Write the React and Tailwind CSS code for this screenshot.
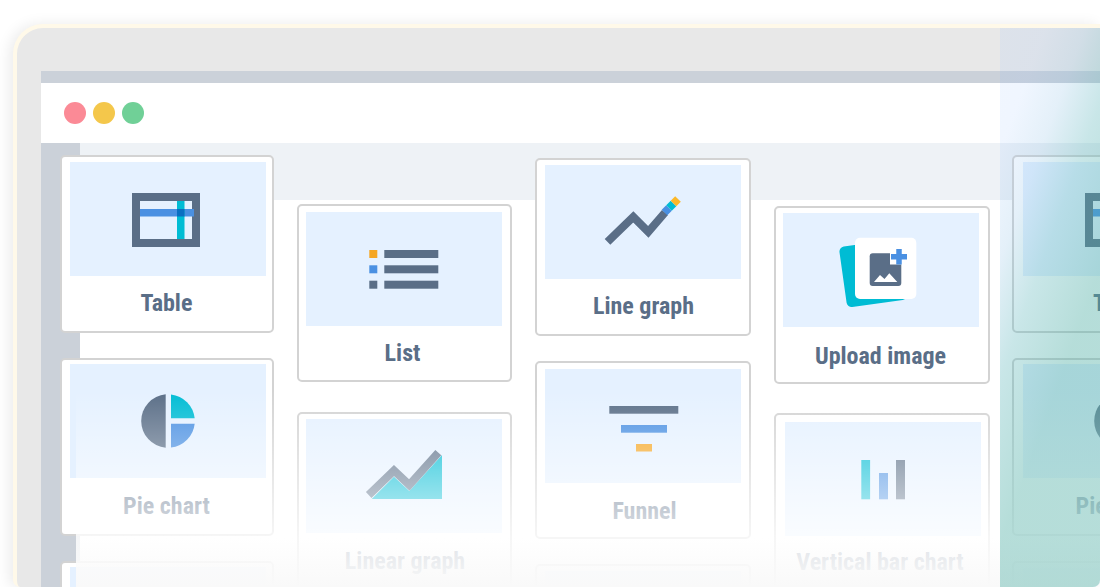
const SLATE = "#5a6e87";
const BLUE = "#4a90e2";
const CYAN = "#00bcd4";
const ORANGE = "#f5a623";

const TableIcon = () => (
  <svg viewBox="0 0 196 114" className="h-full w-full">
    <rect x="66" y="35" width="60" height="46" fill="none" stroke={SLATE} strokeWidth="8" />
    <rect x="70" y="47" width="54" height="7.5" fill={BLUE} />
    <rect x="107" y="39" width="7.5" height="38" fill={CYAN} />
    <rect x="107" y="47" width="7.5" height="7.5" fill="#0a6fc2" />
  </svg>
);

const ListIcon = () => (
  <svg viewBox="0 0 196 114" className="h-full w-full">
    <rect x="63.3" y="38" width="8" height="8" fill={ORANGE} />
    <rect x="63.3" y="53.3" width="8" height="8" fill={BLUE} />
    <rect x="63.3" y="68.7" width="8" height="8" fill={SLATE} />
    <rect x="78.3" y="38" width="54" height="8" fill={SLATE} />
    <rect x="78.3" y="53.3" width="54" height="8" fill={SLATE} />
    <rect x="78.3" y="68.7" width="54" height="8" fill={SLATE} />
  </svg>
);

const LineIcon = () => (
  <svg viewBox="0 0 196 114" className="h-full w-full">
    <polyline points="62.5,76.8 88.3,51.8 103.3,66.8 120,47.5" fill="none" stroke={SLATE} strokeWidth="8" />
    <line x1="119.5" y1="47.5" x2="124" y2="43" stroke={BLUE} strokeWidth="8" />
    <line x1="124" y1="43" x2="128.5" y2="38.5" stroke={CYAN} strokeWidth="8" />
    <line x1="128.5" y1="38.5" x2="133" y2="34" stroke="#fbb829" strokeWidth="8" />
  </svg>
);

const UploadIcon = () => (
  <svg viewBox="0 0 196 114" className="h-full w-full">
    <rect x="59.75" y="29.75" width="61" height="61" rx="5" fill={CYAN} transform="rotate(-8 90.25 60.25)" />
    <rect x="72" y="24.7" width="61.3" height="61.3" rx="5" fill="#fff" />
    <rect x="86.7" y="40.3" width="31.6" height="32.7" rx="3" fill={SLATE} />
    <rect x="107" y="36" width="14" height="15.5" fill="#fff" />
    <path d="M91 69 L97 62 L101.5 66 L106.3 60.3 L114.3 69Z" fill="#fff" />
    <path d="M108 43.7 H124 M116 36 V51.5" stroke={BLUE} strokeWidth="5.5" fill="none" />
  </svg>
);

const PieIcon = () => (
  <svg viewBox="0 0 196 114" className="h-full w-full">
    <path d="M95.7 30.3 A26.8 26.8 0 0 0 95.7 83.7Z" fill={SLATE} />
    <path d="M101 30.4 A26.8 26.8 0 0 1 124.66 54.3 L101 54.3Z" fill={CYAN} />
    <path d="M101 59.7 L124.66 59.7 A26.8 26.8 0 0 1 101 83.6Z" fill={BLUE} />
  </svg>
);

const LinearIcon = () => (
  <svg viewBox="0 0 196 114" className="h-full w-full">
    <path d="M65.7 80 L88 57.7 L103.3 72 L136 36 V80Z" fill={CYAN} />
    <polyline points="62.7,76 88,51.6 103.3,66 132.3,33.7" fill="none" stroke={SLATE} strokeWidth="8" />
  </svg>
);

const FunnelIcon = () => (
  <svg viewBox="0 0 196 114" className="h-full w-full">
    <rect x="64.3" y="37" width="69" height="7.7" fill={SLATE} />
    <rect x="76" y="56" width="46" height="7.7" fill={BLUE} />
    <rect x="91" y="75" width="16" height="7.5" fill={ORANGE} />
  </svg>
);

const BarsIcon = () => (
  <svg viewBox="0 0 196 114" className="h-full w-full">
    <rect x="76.3" y="38" width="8.8" height="39.3" fill={CYAN} />
    <rect x="94" y="51" width="9" height="26.3" fill={BLUE} />
    <rect x="111" y="38" width="9" height="39.3" fill={SLATE} />
  </svg>
);

const columns = [
  {
    className: "ml-[60px] mt-[12px] gap-[25px] w-[214px]",
    cards: [
      { label: "Table", icon: <TableIcon />, inset: "ml-[8px] mt-[5px]" },
      { label: "Pie chart", icon: <PieIcon />, inset: "ml-[8px] mt-[4px]" },
      { label: "", icon: null, inset: "ml-[8px] mt-[4px]" },
    ],
  },
  {
    className: "ml-[23px] mt-[61px] gap-[30px] w-[215px]",
    cards: [
      { label: "List", icon: <ListIcon />, inset: "ml-[7px] mt-[6px]", nudge: "pr-[3px]" },
      { label: "Linear graph", icon: <LinearIcon />, inset: "ml-[7px] mt-[5px]", nudge: "pl-[2px] pt-[2px]" },
    ],
  },
  {
    className: "ml-[23px] mt-[15px] gap-[25px] w-[216px]",
    cards: [
      { label: "Line graph", icon: <LineIcon />, inset: "ml-[8px] mt-[5px]", nudge: "pl-[2px]" },
      { label: "Funnel", icon: <FunnelIcon />, inset: "ml-[8px] mt-[6px]", nudge: "pl-[4px] pt-[2px]" },
      { label: "", icon: null, inset: "ml-[8px] mt-[5px]" },
    ],
  },
  {
    className: "ml-[23px] mt-[63px] gap-[29px] w-[216px]",
    cards: [
      { label: "Upload image", icon: <UploadIcon />, inset: "ml-[7px] mt-[5px]", nudge: "pr-[2px] pt-[4px]" },
      { label: "Vertical bar chart", icon: <BarsIcon />, inset: "ml-[9px] mt-[7px]", nudge: "pr-[3px]" },
    ],
  },
  {
    className: "ml-[22px] mt-[12px] gap-[25px] w-[215px]",
    cards: [
      { label: "Table", icon: <TableIcon />, inset: "ml-[9px] mt-[5px]" },
      { label: "Pie chart", icon: <PieIcon />, inset: "ml-[9px] mt-[4px]" },
      { label: "", icon: null, inset: "ml-[9px] mt-[5px]" },
    ],
  },
];

const Card = ({ label, icon, inset, nudge = "" }) => (
  <div className="flex h-[178px] w-full shrink-0 flex-col rounded-[5px] border-2 border-[#d3d3d3] bg-white">
    <div className={`h-[114px] w-[196px] shrink-0 bg-[#e5f1ff] ${inset}`}>{icon}</div>
    <div className={`flex flex-1 items-center justify-center whitespace-nowrap font-['Roboto',sans-serif] text-[24px] font-bold text-[#5a6e87] [font-stretch:75%] ${nudge}`}>
      {label}
    </div>
  </div>
);

export default function App() {
  return (
    <div className="h-[587px] w-[1100px] overflow-hidden bg-white pt-[24px] pl-[13px]">
      <div className="relative h-[562.5px] w-[1087px] overflow-hidden rounded-tl-[30px] rounded-b-[7px] border-t-[4.5px] border-l-[4.5px] border-[#fff9e9] bg-[#e8e8e8] pt-[42.5px] pl-[23.5px] shadow-[-4px_0px_14px_rgba(0,0,0,0.08)]">
        <div className="flex h-full flex-col border-t-[12px] border-[#cbd1d9] bg-white">
          <div className="flex h-[60px] shrink-0 items-center gap-[7.4px] pl-[23px]">
            <span className="h-[22px] w-[22px] rounded-full bg-[#fb8a96]" />
            <span className="h-[22px] w-[22px] rounded-full bg-[#f4c74b]" />
            <span className="h-[22px] w-[22px] rounded-full bg-[#70d097]" />
          </div>
          <div className="relative flex flex-1">
            <div className="w-[39px] bg-[#cbd1d9]" />
            <div className="flex-1">
              <div className="h-[57px] bg-[#eef2f6]" />
            </div>
            <div className="absolute top-0 left-[-41px] flex">
              {columns.map((col, i) => (
                <div key={i} className={`flex shrink-0 flex-col ${col.className}`}>
                  {col.cards.map((card, j) => (
                    <Card key={j} {...card} />
                  ))}
                </div>
              ))}
            </div>
          </div>
        </div>
        {/* bottom fade, leaves the left strip alone */}
        <div className="absolute right-0 bottom-0 left-[58.5px] h-[197px] bg-[linear-gradient(to_bottom,rgba(255,255,255,0),rgba(255,255,255,0.8)_75%,#f9f9f9)]" />
        {/* tinted glass panel on the right */}
        <div className="absolute top-0 right-0 bottom-0 w-[100px] bg-[linear-gradient(110deg,rgba(130,180,255,0.11)_0%,rgba(130,180,255,0.12)_15%,rgba(120,180,225,0.2)_28%,rgba(90,180,185,0.33)_42%,rgba(80,175,165,0.42)_62%,rgba(80,175,165,0.42)_100%)]" />
      </div>
    </div>
  );
}
